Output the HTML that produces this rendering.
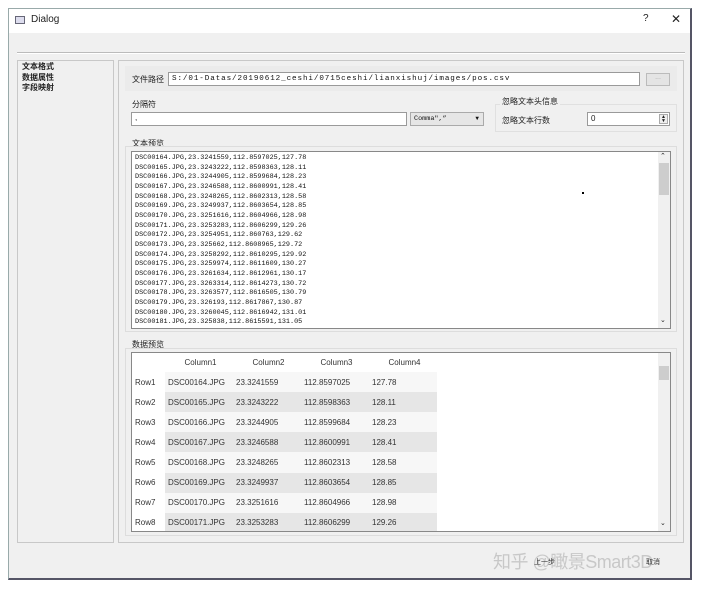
<!DOCTYPE html><html><head><meta charset="utf-8"><style>
*{margin:0;padding:0;box-sizing:border-box}
body{width:703px;height:589px;background:#fff;position:relative;overflow:hidden;font-family:"Liberation Sans","Noto Sans CJK SC",sans-serif;font-size:8px;color:#222}
.a{position:absolute}
.win{left:8px;top:8px;width:684px;height:572px;background:#f0f0f0;border:1px solid #9aa;border-right:2px solid #556;border-bottom:2px solid #556}
.tb{left:9px;top:9px;width:681px;height:24px;background:#fff}
.box{border:1px solid #c8c8c8}
.inp{background:#fff;border:1px solid #9a9a9a}
.mono{font-family:"Liberation Mono","Noto Sans CJK SC",monospace;font-size:6.8px;line-height:9.65px;color:#111}
table{border-collapse:collapse;font-size:8px;color:#333}
td{height:20.1px;padding-left:3px;white-space:nowrap}
</style></head><body>
<div class="a win"></div>
<div class="a tb"></div>
<div class="a" style="left:15px;top:16px;width:10px;height:8px;border:1px solid #667;background:#dde"></div>
<div class="a" style="left:31px;top:14px;font-size:10px">Dialog</div>
<div class="a" style="left:643px;top:13px;font-size:10px">?</div>
<div class="a" style="left:671px;top:12px;font-size:12px">✕</div>
<div class="a" style="left:17px;top:52px;width:668px;height:2px;border-top:1px solid #bbb;border-bottom:1px solid #fff"></div>
<div class="a box" style="left:17px;top:60px;width:97px;height:483px;background:#f0f0f0"></div>
<div class="a" style="left:22px;top:62px;font-size:8px;line-height:10.5px;font-weight:bold">文本格式<br>数据属性<br>字段映射</div>
<div class="a box" style="left:118px;top:60px;width:566px;height:483px"></div>
<div class="a" style="left:125px;top:66px;width:552px;height:25px;background:#ebebeb"></div>
<div class="a" style="left:132px;top:74px">文件路径</div>
<div class="a inp" style="left:168px;top:72px;width:472px;height:14px;padding-left:3px;font-family:'Liberation Mono',monospace;font-size:7.6px;letter-spacing:0.9px;line-height:12px;color:#111;white-space:nowrap;overflow:hidden">S:/01-Datas/20190612_ceshi/0715ceshi/lianxishuj/images/pos.csv</div>
<div class="a" style="left:646px;top:73px;width:24px;height:13px;border:1px solid #bbb;background:#e4e4e4;color:#aaa;font-size:7px;text-align:center">...</div>
<div class="a" style="left:132px;top:99px">分隔符</div>
<div class="a inp" style="left:131px;top:112px;width:276px;height:14px;padding-left:3px;line-height:10px">,</div>
<div class="a mono" style="left:410px;top:112px;width:74px;height:14px;border:1px solid #aaa;background:#e6e6e6;padding-left:3px;line-height:12px">Comma",”<span style="position:absolute;right:4px;font-size:6px">▼</span></div>
<div class="a box" style="left:495px;top:104px;width:182px;height:28px;border-color:#e0e0e0"></div>
<div class="a" style="left:500px;top:96px;padding:0 2px;background:#f0f0f0">忽略文本头信息</div>
<div class="a" style="left:502px;top:115px">忽略文本行数</div>
<div class="a inp" style="left:587px;top:112px;width:83px;height:14px;padding-left:3px;line-height:12px">0<span style="position:absolute;right:1px;top:1px;width:9px;height:10px;border:1px solid #aaa;background:#eee;font-size:5px;line-height:4px;text-align:center">▲<br>▼</span></div>
<div class="a" style="left:132px;top:138px">文本预览</div>
<div class="a box" style="left:125px;top:146px;width:552px;height:186px;border-color:#ddd"></div>
<div class="a inp" style="left:131px;top:151px;width:540px;height:178px;border-color:#888"></div>
<div class="a" style="left:658px;top:152px;width:12px;height:176px;background:#f0f0f0"></div>
<div class="a" style="left:659px;top:163px;width:10px;height:32px;background:#cdcdcd"></div>
<div class="a" style="left:660px;top:152px;font-size:7px">⌃</div>
<div class="a" style="left:660px;top:316px;font-size:7px">⌄</div>
<div class="a" style="left:582px;top:192px;width:2px;height:2px;background:#000"></div>
<div class="a mono" style="left:135px;top:154px">DSC00164.JPG,23.3241559,112.8597025,127.78<br>DSC00165.JPG,23.3243222,112.8598363,128.11<br>DSC00166.JPG,23.3244905,112.8599684,128.23<br>DSC00167.JPG,23.3246588,112.8600991,128.41<br>DSC00168.JPG,23.3248265,112.8602313,128.58<br>DSC00169.JPG,23.3249937,112.8603654,128.85<br>DSC00170.JPG,23.3251616,112.8604966,128.98<br>DSC00171.JPG,23.3253283,112.8606299,129.26<br>DSC00172.JPG,23.3254951,112.860763,129.62<br>DSC00173.JPG,23.325662,112.8608965,129.72<br>DSC00174.JPG,23.3258292,112.8610295,129.92<br>DSC00175.JPG,23.3259974,112.8611609,130.27<br>DSC00176.JPG,23.3261634,112.8612961,130.17<br>DSC00177.JPG,23.3263314,112.8614273,130.72<br>DSC00178.JPG,23.3263577,112.8616505,130.79<br>DSC00179.JPG,23.326193,112.8617867,130.87<br>DSC00180.JPG,23.3260045,112.8616942,131.01<br>DSC00181.JPG,23.325838,112.8615591,131.05</div>
<div class="a" style="left:132px;top:339px">数据预览</div>
<div class="a box" style="left:125px;top:348px;width:552px;height:188px;border-color:#ddd"></div>
<div class="a inp" style="left:131px;top:352px;width:540px;height:180px;border-color:#888;overflow:hidden">
<table style="margin-top:-1px">
<tr style="background:#fff"><td style="width:33px"></td><td style="width:68px;text-align:center">Column1</td><td style="width:68px;text-align:center">Column2</td><td style="width:68px;text-align:center">Column3</td><td style="width:68px;text-align:center">Column4</td></tr>
<tr style="background:#f7f7f7"><td style="background:#fff">Row1</td><td>DSC00164.JPG</td><td>23.3241559</td><td>112.8597025</td><td>127.78</td></tr>
<tr style="background:#e6e6e6"><td style="background:#fff">Row2</td><td>DSC00165.JPG</td><td>23.3243222</td><td>112.8598363</td><td>128.11</td></tr>
<tr style="background:#f7f7f7"><td style="background:#fff">Row3</td><td>DSC00166.JPG</td><td>23.3244905</td><td>112.8599684</td><td>128.23</td></tr>
<tr style="background:#e6e6e6"><td style="background:#fff">Row4</td><td>DSC00167.JPG</td><td>23.3246588</td><td>112.8600991</td><td>128.41</td></tr>
<tr style="background:#f7f7f7"><td style="background:#fff">Row5</td><td>DSC00168.JPG</td><td>23.3248265</td><td>112.8602313</td><td>128.58</td></tr>
<tr style="background:#e6e6e6"><td style="background:#fff">Row6</td><td>DSC00169.JPG</td><td>23.3249937</td><td>112.8603654</td><td>128.85</td></tr>
<tr style="background:#f7f7f7"><td style="background:#fff">Row7</td><td>DSC00170.JPG</td><td>23.3251616</td><td>112.8604966</td><td>128.98</td></tr>
<tr style="background:#e6e6e6"><td style="background:#fff">Row8</td><td>DSC00171.JPG</td><td>23.3253283</td><td>112.8606299</td><td>129.26</td></tr>
</table></div>
<div class="a" style="left:658px;top:353px;width:12px;height:178px;background:#f0f0f0"></div>
<div class="a" style="left:659px;top:366px;width:10px;height:14px;background:#cdcdcd"></div>
<div class="a" style="left:660px;top:519px;font-size:7px">⌄</div>
<div class="a" style="left:493px;top:548px;font-size:18px;color:#c8c8c8;letter-spacing:-0.5px">知乎 @瞰景Smart3D</div>
<div class="a" style="left:534px;top:557px;font-size:7px;color:#333">上一步</div>
<div class="a" style="left:646px;top:557px;font-size:7px;color:#333">取消</div>
</body></html>
